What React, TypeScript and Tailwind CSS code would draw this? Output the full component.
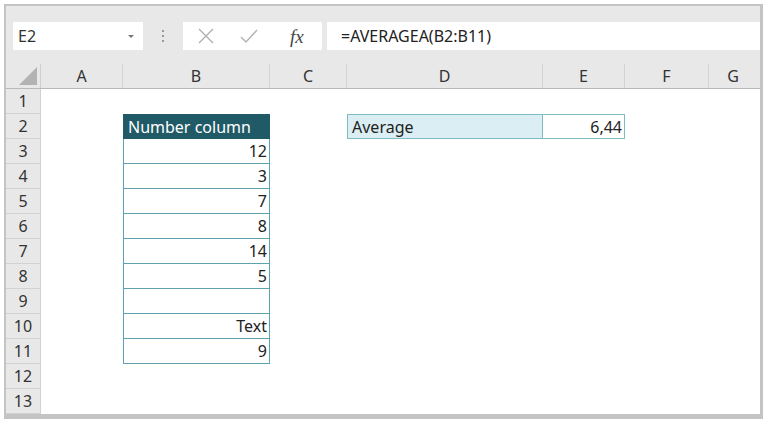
import React from "react";

const cols = [
  { k: "A", w: 82 },
  { k: "B", w: 147 },
  { k: "C", w: 77 },
  { k: "D", w: 196 },
  { k: "E", w: 82 },
  { k: "F", w: 84 },
  { k: "G", w: 48 },
];

const bValues: Record<number, string> = {
  3: "12",
  4: "3",
  5: "7",
  6: "8",
  7: "14",
  8: "5",
  9: "",
  10: "Text",
  11: "9",
};

function Cell({ row, col }: { row: number; col: string }) {
  const w = cols.find((c) => c.k === col)!.w;
  let cls = "h-[25px] shrink-0 flex items-center text-[16px] text-[#222] leading-none";
  let content: React.ReactNode = null;
  if (col === "B" && row === 2) {
    cls += " bg-[#215a67] text-white border border-[#215a67] pl-[4px]";
    content = <span className="text-white">Number column</span>;
  } else if (col === "B" && row >= 3 && row <= 11) {
    cls += " border-l border-r border-b border-[#5ba3ad] justify-end pr-[2px]";
    content = bValues[row];
  } else if (col === "D" && row === 2) {
    cls += " bg-[#daeef3] border border-[#7fbcc6] pl-[4px]";
    content = "Average";
  } else if (col === "E" && row === 2) {
    cls += " border-t border-b border-r border-[#7fbcc6] justify-end pr-[2px]";
    content = "6,44";
  }
  return (
    <div className={cls} style={{ width: w }}>
      {content}
    </div>
  );
}

export default function App() {
  const rows = Array.from({ length: 13 }, (_, i) => i + 1);
  return (
    <div
      className="w-[768px] h-[424px] bg-white pt-[4px] pl-[4px] overflow-hidden"
      style={{ fontFamily: '"Noto Sans", "Open Sans", sans-serif' }}
    >
      <div className="w-[759px] h-[415px] border-l-[2px] border-t-[2px] border-r-[3px] border-b-[5px] border-[#c4c4c4] bg-[#e8e8e8] flex flex-col overflow-hidden">
        {/* toolbar */}
        <div className="h-[58px] shrink-0 flex items-start pt-[16px] pl-[7px]">
          <div className="w-[130px] h-[28px] bg-white flex items-center pl-[5px] pr-[8px] justify-between">
            <span className="text-[16px] text-[#333] leading-none">E2</span>
            <svg width="8" height="5" viewBox="0 0 8 5">
              <path d="M1 1 L4 4 L7 1 Z" fill="#777" />
            </svg>
          </div>
          <div className="w-[40px] h-[28px] flex flex-col items-center justify-center gap-[3px]">
            <span className="w-[2px] h-[2px] bg-[#9a9a9a]" />
            <span className="w-[2px] h-[2px] bg-[#9a9a9a]" />
            <span className="w-[2px] h-[2px] bg-[#9a9a9a]" />
          </div>
          <div className="w-[139px] h-[28px] bg-white flex items-center">
            <svg width="18" height="18" viewBox="0 0 18 18" className="ml-[14px]">
              <path d="M2 2 L16 16 M16 2 L2 16" stroke="#adadad" strokeWidth="1.3" fill="none" />
            </svg>
            <svg width="20" height="18" viewBox="0 0 20 18" className="ml-[24px]">
              <path d="M2 10 L7 15 L18 3" stroke="#b4b4b4" strokeWidth="1.5" fill="none" />
            </svg>
            <span
              className="ml-[31px] text-[19px] italic text-[#444] leading-none"
              style={{ fontFamily: '"Liberation Serif", serif' }}
            >
              fx
            </span>
          </div>
          <div className="ml-[5px] flex-1 h-[28px] bg-white flex items-center pl-[14px]">
            <span className="text-[16px] text-[#222] leading-none">=AVERAGEA(B2:B11)</span>
          </div>
        </div>
        {/* column header */}
        <div className="h-[25px] shrink-0 flex bg-[#e8e8e8] border-b border-[#b8b8b8]">
          <div className="w-[35px] shrink-0 flex items-end justify-end pr-[3px] pb-[3px] border-r border-[#cfcfcf]">
            <svg width="18" height="18" viewBox="0 0 18 18">
              <path d="M18 0 L18 18 L0 18 Z" fill="#b3b3b3" />
            </svg>
          </div>
          {cols.map((c, i) => (
            <div
              key={c.k}
              className={
                "shrink-0 flex items-center justify-center text-[16px] text-[#333] leading-none " +
                (i < cols.length - 1 ? "border-r border-[#d2d2d2]" : "")
              }
              style={{ width: c.w }}
            >
              {c.k}
            </div>
          ))}
        </div>
        {/* rows */}
        <div className="flex flex-col bg-white flex-1 overflow-hidden">
          {rows.map((r) => (
            <div key={r} className="flex h-[25px] shrink-0">
              <div className="w-[35px] h-[25px] shrink-0 bg-[#e8e8e8] border-r border-b border-[#d2d2d2] flex items-center justify-center text-[16px] text-[#333] leading-none">
                {r}
              </div>
              {cols.map((c) => (
                <Cell key={c.k} row={r} col={c.k} />
              ))}
            </div>
          ))}
        </div>
      </div>
    </div>
  );
}
